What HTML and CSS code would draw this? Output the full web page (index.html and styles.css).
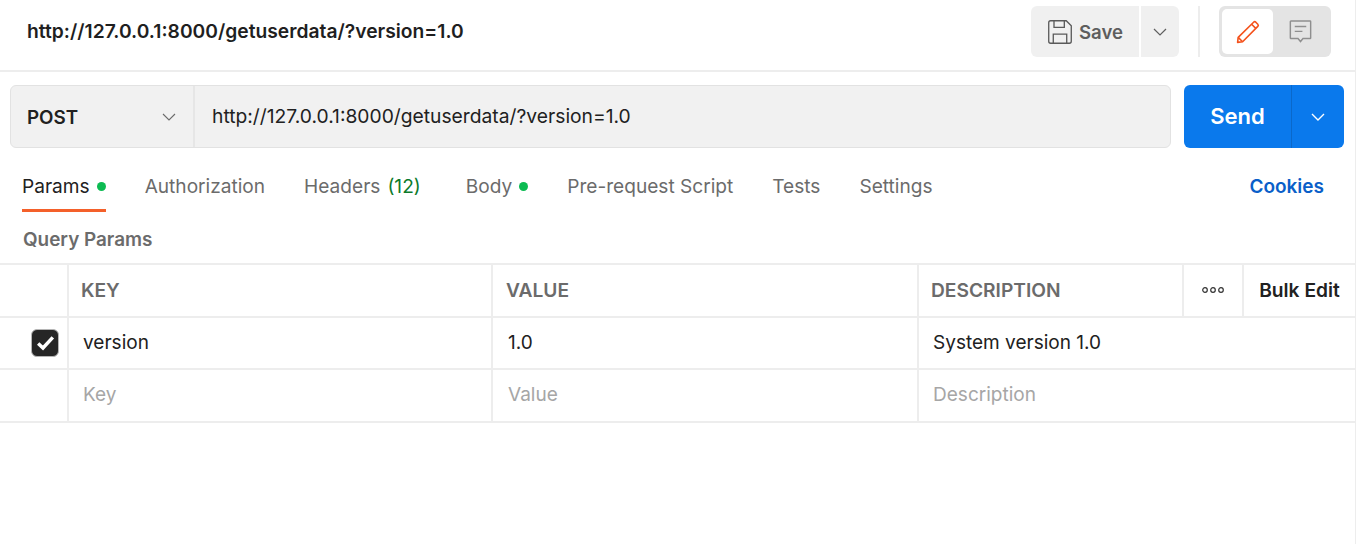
FILE: index.html
```html
<!DOCTYPE html>
<html lang="en">
<head>
<meta charset="utf-8">
<title>Request</title>
<link rel="stylesheet" href="styles.css">
</head>
<body>
<div class="app">
  <header class="top">
    <div class="title">http://127.0.0.1:8000/getuserdata/?version=1.0</div>
    <div class="save-group">
      <button class="save">
        <svg class="ico-save" viewBox="2 2 20 20" fill="none" stroke="#5a5a5a" stroke-width="1.1"><path d="M2.6 4.2a1.6 1.6 0 0 1 1.6-1.6h13l4.2 4.2v13a1.6 1.6 0 0 1-1.6 1.6H4.2a1.6 1.6 0 0 1-1.6-1.6z"/><path d="M7 2.8v5.4h8.6V2.8"/><path d="M6.4 21.2v-7.4h11.2v7.4"/></svg>
        <span>Save</span>
      </button>
      <button class="save-more"><svg class="chev" viewBox="0 0 14 8" fill="none" stroke="#5f5f5f" stroke-width="1.2"><path d="M1 1l6 6 6-6"/></svg></button>
    </div>
    <div class="vsep"></div>
    <div class="mode">
      <div class="mode-on">
        <svg class="ico-pen" viewBox="0 0 24 24" fill="none" stroke="#f4521c" stroke-width="1.6" stroke-linejoin="round"><path d="M1.6 22.4l.6-5L17.6 2.2a1.6 1.6 0 0 1 2.2 0l2 2a1.6 1.6 0 0 1 0 2.2L6.6 21.8z"/><path d="M15.6 4.2l4.2 4.2M2.2 17.4l4.4 4.4"/></svg>
      </div>
      <div class="mode-off">
        <svg class="ico-note" viewBox="0 0 24 24" fill="none" stroke="#8f8f8f" stroke-width="1.5"><path d="M2 1.6h20a.6.6 0 0 1 .6.6v17a.6.6 0 0 1-.6.6h-7.4L12 23l-2.6-3.2H2a.6.6 0 0 1-.6-.6v-17a.6.6 0 0 1 .6-.6z"/><path d="M6 7.4h12M6 12.4h8"/></svg>
      </div>
    </div>
  </header>

  <section class="request">
    <div class="urlbar">
      <div class="method"><span class="method-name">POST</span><svg class="chev" viewBox="0 0 14 8" fill="none" stroke="#6b6b6b" stroke-width="1.1"><path d="M1 1l6 6 6-6"/></svg></div>
      <div class="url">http://127.0.0.1:8000/getuserdata/?version=1.0</div>
    </div>
    <div class="send">
      <div class="send-label">Send</div>
      <div class="send-more"><svg class="chev" viewBox="0 0 14 8" fill="none" stroke="#ffffff" stroke-width="1.4"><path d="M1 1l6 6 6-6"/></svg></div>
    </div>
  </section>

  <nav class="tabs">
    <a class="tab active">Params<i class="dot"></i></a>
    <a class="tab">Authorization</a>
    <a class="tab tab-h">Headers <em>(12)</em></a>
    <a class="tab">Body<i class="dot"></i></a>
    <a class="tab">Pre-request Script</a>
    <a class="tab">Tests</a>
    <a class="tab">Settings</a>
    <a class="cookies">Cookies</a>
  </nav>

  <div class="qp">Query Params</div>

  <div class="grid">
    <div class="row head">
      <div class="c c0"></div>
      <div class="c c1">KEY</div>
      <div class="c c2">VALUE</div>
      <div class="c c3">DESCRIPTION</div>
      <div class="c c4"><svg class="dots" viewBox="0 0 22 6" fill="none" stroke="#333" stroke-width="1.2"><circle cx="3" cy="3" r="2.3"/><circle cx="11" cy="3" r="2.3"/><circle cx="19" cy="3" r="2.3"/></svg></div>
      <div class="c c5">Bulk Edit</div>
    </div>
    <div class="row data">
      <div class="c c0"><span class="check"><svg viewBox="0 0 16 14" fill="none" stroke="#fff" stroke-width="3"><path d="M1.6 7.4l4.2 4L14.4 2"/></svg></span></div>
      <div class="c c1">version</div>
      <div class="c c2">1.0</div>
      <div class="c c3 wide">System version 1.0</div>
    </div>
    <div class="row data ph">
      <div class="c c0"></div>
      <div class="c c1">Key</div>
      <div class="c c2">Value</div>
      <div class="c c3 wide">Description</div>
    </div>
  </div>
</div>
</body>
</html>
```
FILE: styles.css
```css
* { box-sizing: border-box; }
html, body { margin: 0; padding: 0; background: #fff; height: 100%; overflow: hidden; }
body { font-family: Inter, "Liberation Sans", sans-serif; color: #212121; }
.app { width: 1356px; height: 544px; border-right: 1px solid #ededed; }

.top { height: 72px; padding: 6px 24px 0 27px; display: flex; align-items: flex-start; border-bottom: 2px solid #ededed; }
.title { flex: 1; font-size: 19.25px; font-weight: 600; line-height: 50px; color: #1f1f1f; height: 51px; }
.save-group { display: flex; gap: 2px; }
button { border: 0; font: inherit; padding: 0; }
.save { width: 108px; height: 51px; background: #f0f0f0; border-radius: 6px 0 0 6px; display: flex; align-items: center; padding-left: 17px; gap: 7px; font-size: 18.6px; font-weight: 600; color: #5e5e5e; }
.ico-save { width: 24px; height: 24px; }
.save-more { width: 38px; height: 51px; background: #f0f0f0; border-radius: 0 6px 6px 0; display: flex; align-items: center; justify-content: center; }
.chev { width: 14px; height: 8px; }
.vsep { width: 2px; height: 51px; background: #ededed; margin: 0 19px 0 19px; }
.mode { width: 112px; height: 51px; background: #e4e4e4; border-radius: 6px; padding: 3px; display: flex; }
.mode-on { width: 51px; height: 45px; background: #fff; border-radius: 5px; display: flex; align-items: center; justify-content: center; }
.mode-off { flex: 1; display: flex; align-items: center; justify-content: center; padding-bottom: 1px; }
.ico-pen { width: 24px; height: 24px; }
.ico-note { width: 23px; height: 24px; }

.request { display: flex; padding: 13px 0 0 10px; height: 76px; }
.urlbar { width: 1161px; height: 63px; background: #f1f1f1; border: 1px solid #e2e2e2; border-radius: 6px; display: flex; align-items: center; }
.method { width: 184px; height: 61px; border-right: 2px solid #e6e6e6; display: flex; align-items: center; justify-content: space-between; padding: 0 17px 0 16px; font-size: 18.8px; font-weight: 600; color: #212121; }
.method-name { padding-top: 2px; }
.url { padding: 0 0 2px 17px; font-size: 19.25px; color: #212121; }
.send { width: 160px; height: 63px; margin-left: 13px; background: #0a79ec; border-radius: 6px; display: flex; color: #fff; }
.send-label { width: 108px; border-right: 1px solid #0a68ca; text-align: center; line-height: 63px; font-size: 22px; font-weight: 600; }
.send-more { flex: 1; display: flex; align-items: center; justify-content: center; }

.tabs { height: 64px; padding-left: 22px; display: flex; font-size: 19.1px; color: #6b6b6b; }
.tab { display: flex; align-items: flex-start; height: 64px; margin-right: 39px; padding-top: 26px; line-height: 24px; white-space: nowrap; }
.tab em { font-style: normal; color: #0c7a2b; margin-left: 7px; }
.tab-h { margin-right: 45px; }
.active { color: #212121; border-bottom: 3px solid #f4602a; }
.dot { width: 9px; height: 9px; background: #0cbb52; border-radius: 50%; margin: 8px 0 0 7px; }
.cookies { margin-left: auto; margin-right: 31px; padding-top: 27px; line-height: 24px; color: #0a5fc9; font-weight: 600; font-size: 19px; }

.qp { height: 51px; padding: 16px 0 0 23px; font-size: 18.9px; font-weight: 600; line-height: 24px; color: #6b6b6b; }

.grid { width: 1355px; border-top: 2px solid #ededed; font-size: 19.05px; }
.row { display: flex; height: 52.6px; border-bottom: 2px solid #ededed; }
.head { font-size: 19.2px; }
.c { display: flex; align-items: center; border-right: 2px solid #ededed; height: 100%; }
.data .c { padding-bottom: 1px; }
.c0 { width: 69px; justify-content: flex-end; padding-right: 8px; }
.data .c0 { padding-bottom: 0; }
.c1 { width: 424px; padding-left: 12px; }
.c2 { width: 426px; padding-left: 13px; }
.c3 { width: 265px; padding-left: 12px; }
.c4 { width: 60px; justify-content: center; }
.c5 { flex: 1; border-right: 0; justify-content: center; font-weight: 600; color: #212121; }
.wide { flex: 1; border-right: 0; padding-left: 14px; }
.head .c1, .head .c2, .head .c3 { font-weight: 600; color: #6b6b6b; }
.data .c1 { padding-left: 14px; }
.data .c2 { padding-left: 15px; }
.ph { color: #a6a6a6; }
.dots { width: 22px; height: 6px; }
.check { width: 28px; height: 28px; background: #262626; border: 1px solid #b5b5b5; border-radius: 6px; display: flex; align-items: center; justify-content: center; }
.check svg { width: 19px; height: 16px; }
```
